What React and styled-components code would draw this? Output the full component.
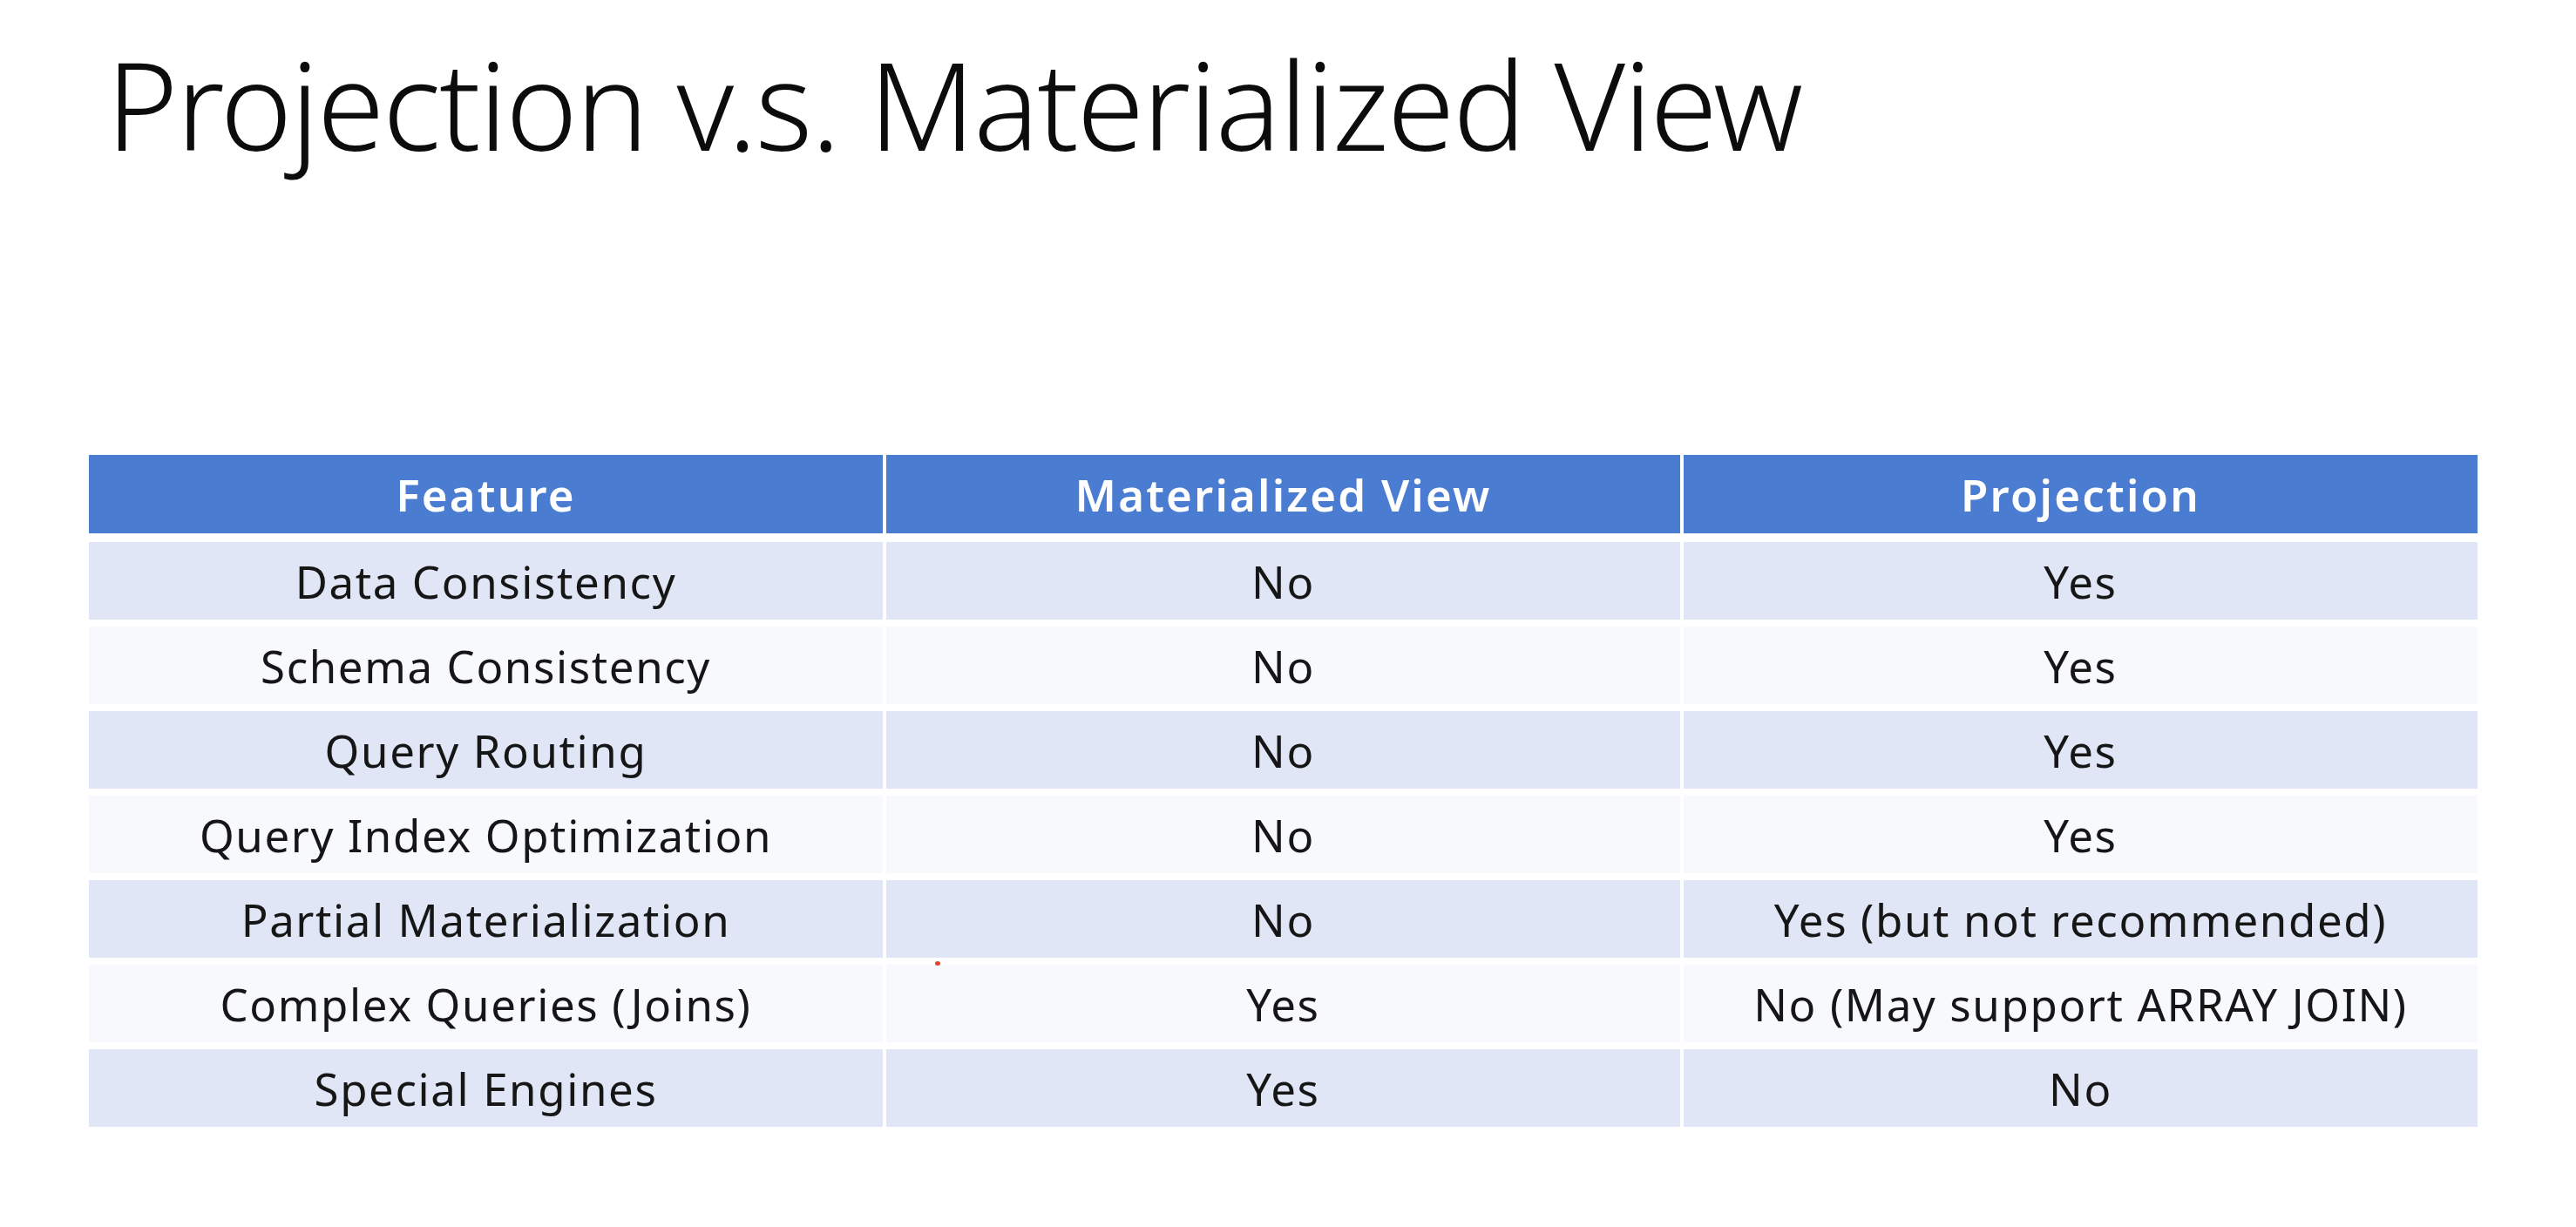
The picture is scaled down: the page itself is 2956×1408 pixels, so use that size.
import styled, { createGlobalStyle } from "styled-components";

const rows = [
  ["Data Consistency", "No", "Yes"],
  ["Schema Consistency", "No", "Yes"],
  ["Query Routing", "No", "Yes"],
  ["Query Index Optimization", "No", "Yes"],
  ["Partial Materialization", "No", "Yes (but not recommended)"],
  ["Complex Queries (Joins)", "Yes", "No (May support ARRAY JOIN)"],
  ["Special Engines", "Yes", "No"],
];

const GlobalStyle = createGlobalStyle`
  html, body {
    margin: 0;
    padding: 0;
    background: #ffffff;
  }
  body {
    font-family: "Noto Sans", "Open Sans", sans-serif;
    color: #111111;
  }
`;

const Slide = styled.div`
  width: 2956px;
  height: 1408px;
  box-sizing: border-box;
  padding: 49px 113px 0 102px;
  display: flex;
  flex-direction: column;
  background: #ffffff;
`;

const Title = styled.h1`
  margin: 0 0 0 20px;
  font-size: 140px;
  line-height: 1;
  font-weight: 300;
  font-stretch: semi-condensed;
  letter-spacing: -2px;
  color: #0c0c0c;
`;

const Table = styled.div`
  position: relative;
  margin-top: 333px;
  display: flex;
  flex-direction: column;
  gap: 10px;
`;

const Grid = styled.div`
  display: grid;
  grid-template-columns: repeat(3, 1fr);
  grid-auto-rows: ${({ $head }) => ($head ? "90px" : "89px")};
  column-gap: 4px;
  row-gap: 8px;
`;

const Cell = styled.div`
  display: flex;
  align-items: center;
  justify-content: center;
  font-size: 51px;
  letter-spacing: ${({ $head }) => ($head ? "2.2px" : "1.6px")};
  font-weight: ${({ $head }) => ($head ? 600 : 400)};
  color: ${({ $head }) => ($head ? "#ffffff" : "#161616")};
  background: ${({ $head, $odd }) =>
    $head ? "#4a7cd1" : $odd ? "#e0e6f6" : "#f7f9fd"};
  white-space: nowrap;
`;

// little red speck left on the slide
const Speck = styled.span`
  position: absolute;
  left: 971px;
  top: 581px;
  width: 6px;
  height: 5px;
  border-radius: 50%;
  background: #e0452a;
`;

export default function App() {
  return (
    <>
      <GlobalStyle />
      <Slide>
        <Title>Projection v.s. Materialized View</Title>
        <Table>
          <Grid $head>
            <Cell $head>Feature</Cell>
            <Cell $head>Materialized View</Cell>
            <Cell $head>Projection</Cell>
          </Grid>
          <Grid>
            {rows.map((row, i) =>
              row.map((text, j) => (
                <Cell key={`${i}-${j}`} $odd={i % 2 === 0}>
                  {text}
                </Cell>
              ))
            )}
          </Grid>
          <Speck />
        </Table>
      </Slide>
    </>
  );
}
